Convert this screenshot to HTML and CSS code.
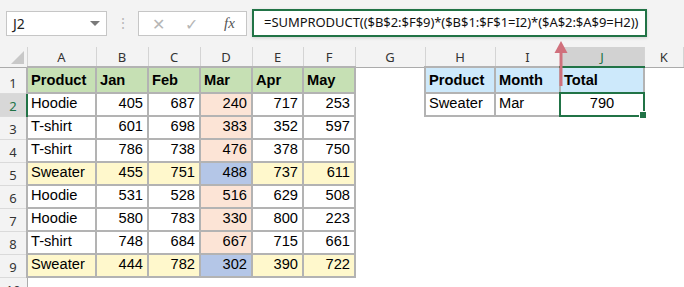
FILE: index.html
```html
<!DOCTYPE html>
<html>

<head>
    <meta charset="utf-8">
    <meta name="viewport" content="width=device-width">
    <title>SUMPRODUCT lookup</title>
    <link rel="stylesheet" href="styles.css">
</head>

<body>
    <div class="formula-bar">
        <div class="name-box">
            <span>J2</span>
            <span class="caret"></span>
        </div>
        <div class="grip">⋮</div>
        <div class="fx-box">
            <span class="btn">✕</span>
            <span class="btn">✓</span>
            <span class="fx">fx</span>
        </div>
        <div class="formula">=SUMPRODUCT(($B$2:$F$9)*($B$1:$F$1=I2)*($A$2:$A$9=H2))</div>
    </div>

    <div class="grid-wrap">
        <table class="sheet">
            <colgroup>
                <col class="w-rh">
                <col class="w-a">
                <col class="w-n">
                <col class="w-n">
                <col class="w-n">
                <col class="w-e">
                <col class="w-n">
                <col class="w-g">
                <col class="w-g">
                <col class="w-i">
                <col class="w-j">
                <col>
            </colgroup>
            <tr class="col-head">
                <th class="corner"><span class="tri"></span></th>
                <th>A</th><th>B</th><th>C</th><th>D</th><th>E</th><th>F</th>
                <th>G</th><th>H</th><th>I</th><th class="sel">J</th><th>K</th>
            </tr>
            <tr class="r1">
                <th class="rh">1</th>
                <td class="t hd">Product</td><td class="t hd">Jan</td><td class="t hd">Feb</td>
                <td class="t hd">Mar</td><td class="t hd">Apr</td><td class="t hd">May</td>
                <td></td>
                <td class="t lh">Product</td><td class="t lh">Month</td><td class="t lh">Total</td>
                <td></td>
            </tr>
            <tr>
                <th class="rh sel">2</th>
                <td class="t">Hoodie</td><td class="t n">405</td><td class="t n">687</td>
                <td class="t n pe">240</td><td class="t n">717</td><td class="t n">253</td>
                <td></td>
                <td class="t">Sweater</td><td class="t">Mar</td><td class="t c active">790</td>
                <td></td>
            </tr>
            <tr>
                <th class="rh">3</th>
                <td class="t">T-shirt</td><td class="t n">601</td><td class="t n">698</td>
                <td class="t n pe">383</td><td class="t n">352</td><td class="t n">597</td>
                <td colspan="5"></td>
            </tr>
            <tr>
                <th class="rh">4</th>
                <td class="t">T-shirt</td><td class="t n">786</td><td class="t n">738</td>
                <td class="t n pe">476</td><td class="t n">378</td><td class="t n">750</td>
                <td colspan="5"></td>
            </tr>
            <tr>
                <th class="rh">5</th>
                <td class="t ye">Sweater</td><td class="t n ye">455</td><td class="t n ye">751</td>
                <td class="t n bl">488</td><td class="t n ye">737</td><td class="t n ye">611</td>
                <td colspan="5"></td>
            </tr>
            <tr>
                <th class="rh">6</th>
                <td class="t">Hoodie</td><td class="t n">531</td><td class="t n">528</td>
                <td class="t n pe">516</td><td class="t n">629</td><td class="t n">508</td>
                <td colspan="5"></td>
            </tr>
            <tr>
                <th class="rh">7</th>
                <td class="t">Hoodie</td><td class="t n">580</td><td class="t n">783</td>
                <td class="t n pe">330</td><td class="t n">800</td><td class="t n">223</td>
                <td colspan="5"></td>
            </tr>
            <tr>
                <th class="rh">8</th>
                <td class="t">T-shirt</td><td class="t n">748</td><td class="t n">684</td>
                <td class="t n pe">667</td><td class="t n">715</td><td class="t n">661</td>
                <td colspan="5"></td>
            </tr>
            <tr>
                <th class="rh">9</th>
                <td class="t ye">Sweater</td><td class="t n ye">444</td><td class="t n ye">782</td>
                <td class="t n bl">302</td><td class="t n ye">390</td><td class="t n ye">722</td>
                <td colspan="5"></td>
            </tr>
            <tr>
                <th class="rh">10</th>
                <td colspan="11"></td>
            </tr>
        </table>

        <svg class="arrow" width="16" height="46" viewBox="0 0 16 46">
            <path d="M8 10 V46" stroke="#d0707c" stroke-width="3" />
            <path d="M1.5 13 L8 1 L14.5 13 Z" fill="#d0707c" />
        </svg>
    </div>
</body>

</html>
```

FILE: styles.css
```css
* {
    margin: 0;
    padding: 0;
    box-sizing: border-box;
}

body {
    width: 684px;
    height: 287px;
    overflow: hidden;
    background: #fff;
    font-family: "Liberation Sans", Arial, sans-serif;
}

.formula-bar {
    height: 47px;
    background: #f3f3f3;
    display: flex;
    align-items: flex-start;
    padding-left: 6px;
    font-family: "Noto Sans", "Open Sans", sans-serif;
}

.name-box {
    margin-top: 11px;
    width: 101px;
    height: 25px;
    background: #fff;
    border: 1px solid #c6c6c6;
    display: flex;
    align-items: center;
    justify-content: space-between;
    padding: 0 6px 0 6px;
    font-size: 14px;
    color: #222;
}

.caret {
    width: 0;
    height: 0;
    border-left: 5px solid transparent;
    border-right: 5px solid transparent;
    border-top: 5px solid #7a7a7a;
}

.grip {
    width: 31px;
    margin-top: 14px;
    text-align: center;
    color: #b8b8b8;
    font-size: 14px;
    line-height: 18px;
}

.fx-box {
    margin-top: 11px;
    width: 109px;
    height: 25px;
    background: #fff;
    border: 1px solid #c6c6c6;
    display: flex;
    align-items: center;
    padding-left: 13px;
}

.btn {
    width: 33px;
    color: #b6b6b6;
    font-size: 16px;
}

.fx {
    margin-left: 6px;
    font-family: "Liberation Serif", serif;
    font-style: italic;
    font-size: 15px;
    color: #555;
}

.formula {
    margin: 9px 0 0 5px;
    width: 395px;
    height: 28px;
    background: #fff;
    border: 2px solid #217346;
    box-shadow: 0 1px 3px rgba(0, 0, 0, .15);
    padding-left: 10px;
    font-size: 13px;
    letter-spacing: -0.05px;
    line-height: 23px;
    color: #111;
    white-space: nowrap;
}

.grid-wrap {
    position: relative;
}

.sheet {
    border-collapse: collapse;
    table-layout: fixed;
    width: 684px;
}

.w-rh { width: 27px; }
.w-a { width: 69px; }
.w-n { width: 52px; }
.w-e { width: 51px; }
.w-g { width: 70px; }
.w-i { width: 65px; }
.w-j { width: 84px; }

.col-head th {
    height: 20px;
    background: #f3f3f3;
    border-right: 1px solid #d4d4d4;
    border-bottom: 1px solid #ababab;
    font-family: "Noto Sans", "Open Sans", sans-serif;
    font-weight: normal;
    font-size: 13px;
    color: #333;
    line-height: 18px;
}

.col-head th.sel {
    background: #d2d2d2;
    color: #217346;
    border-bottom: 2px solid #217346;
}

.corner {
    position: relative;
}

.tri {
    position: absolute;
    right: 3px;
    bottom: 3px;
    width: 0;
    height: 0;
    border-left: 13px solid transparent;
    border-bottom: 13px solid #c8c8c8;
}

.rh {
    height: 23px;
    background: #f3f3f3;
    border-right: 1px solid #ababab;
    border-bottom: 1px solid #dadada;
    font-family: "Noto Sans", "Open Sans", sans-serif;
    font-weight: normal;
    font-size: 13px;
    color: #333;
    vertical-align: bottom;
    line-height: 20px;
    text-align: center;
}

.r1 .rh {
    height: 26px;
}

.rh.sel {
    background: #d8d8d8;
    color: #217346;
    border-right: 2px solid #217346;
}

td {
    font-size: 14.67px;
    line-height: 17px;
    color: #000;
    vertical-align: bottom;
    padding: 0 3px 3px 3px;
    white-space: nowrap;
}

.t {
    border: 2px solid #b3b3b3;
}

.n {
    text-align: right;
    padding-right: 4px;
}

.c {
    text-align: center;
}

.hd {
    background: #c6e0b4;
    font-weight: bold;
}

.lh {
    background: #cde9fb;
    font-weight: bold;
}

.pe {
    background: #fce4d6;
}

.ye {
    background: #fff8cc;
}

.bl {
    background: #b4c6e7;
}

.active {
    position: relative;
    outline: 2px solid #217346;
    outline-offset: -1px;
}

.active::after {
    content: "";
    position: absolute;
    right: -4px;
    bottom: -4px;
    width: 6px;
    height: 6px;
    background: #217346;
    border: 1px solid #fff;
}

.arrow {
    position: absolute;
    left: 553px;
    top: -7px;
}
```
